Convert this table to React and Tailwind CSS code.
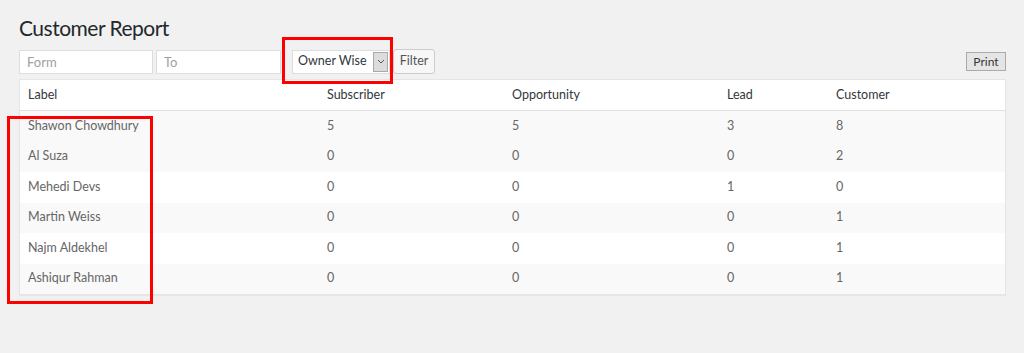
import React from 'react';

const rows = [
  { name: 'Shawon Chowdhury', sub: 5, opp: 5, lead: 3, cust: 8, bg: 'bg-[#f9f9f9]' },
  { name: 'Al Suza', sub: 0, opp: 0, lead: 0, cust: 2, bg: 'bg-[#f9f9f9]' },
  { name: 'Mehedi Devs', sub: 0, opp: 0, lead: 1, cust: 0, bg: 'bg-white' },
  { name: 'Martin Weiss', sub: 0, opp: 0, lead: 0, cust: 1, bg: 'bg-[#f9f9f9]' },
  { name: 'Najm Aldekhel', sub: 0, opp: 0, lead: 0, cust: 1, bg: 'bg-white' },
  { name: 'Ashiqur Rahman', sub: 0, opp: 0, lead: 0, cust: 1, bg: 'bg-[#f9f9f9]' },
];

// column widths taken from the report table
const COLS = 'grid grid-cols-[299px_185px_215px_109px_1fr]';

export default function App() {
  return (
    <div className="relative min-h-[353px] bg-[#f1f1f1] pl-[19px] pr-[18px] pt-[13px] text-[#666] font-['Lato','Open_Sans',sans-serif]">
      <h1 className="text-[21px] tracking-[-0.5px] leading-[30px] text-[#23282d] font-normal">Customer Report</h1>

      {/* Filters */}
      <div className="mt-[6px] flex items-center justify-between h-[25px]">
        <div className="flex items-center">
          <input
            placeholder="Form"
            className="w-[134px] h-[24px] bg-white border border-[#ddd] px-[7px] text-[13px] placeholder:text-[#a0a0a0] outline-none"
          />
          <input
            placeholder="To"
            className="ml-[3px] w-[125px] h-[24px] bg-white border border-[#ddd] px-[7px] text-[13px] placeholder:text-[#a0a0a0] outline-none"
          />
          <div className="ml-[11px] flex items-center w-[98px] h-[24px] bg-white border border-[#ddd] pl-[5px] pr-[1px]">
            <span className="flex-1 text-[12.5px] text-[#32373c]">Owner Wise</span>
            <span className="w-[15px] h-[20px] bg-[#dcdcdc] border border-[#aaa] flex items-center justify-center">
              <svg width="8" height="5" viewBox="0 0 8 5" fill="none">
                <path d="M1 1l3 3 3-3" stroke="#555" strokeWidth="1" />
              </svg>
            </span>
          </div>
          <button className="ml-[3px] h-[25px] w-[42px] bg-[#f7f7f7] border border-[#ccc] rounded-[3px] text-[12.5px] text-[#555]">
            Filter
          </button>
        </div>
        <button className="h-[19px] w-[40px] bg-[#e5e5e5] border border-[#aaa] text-[12px] leading-none text-[#32373c]">
          Print
        </button>
      </div>

      {/* Table */}
      <div className="mt-[5px] bg-white border border-[#e5e5e5] shadow-[0_1px_1px_rgba(0,0,0,0.04)] text-[12.5px]">
        <div className={`${COLS} h-[31px] items-center border-b border-[#e1e1e1] text-[#32373c]`}>
          <div className="pl-[8px]">Label</div>
          <div className="pl-[8px]">Subscriber</div>
          <div className="pl-[8px]">Opportunity</div>
          <div className="pl-[8px]">Lead</div>
          <div className="pl-[8px]">Customer</div>
        </div>
        {rows.map((r) => (
          <div key={r.name} className={`${COLS} h-[30.5px] items-center ${r.bg}`}>
            <div className="pl-[8px]">{r.name}</div>
            <div className="pl-[8px]">{r.sub}</div>
            <div className="pl-[8px]">{r.opp}</div>
            <div className="pl-[8px]">{r.lead}</div>
            <div className="pl-[8px]">{r.cust}</div>
          </div>
        ))}
      </div>

      {/* annotation boxes */}
      <div className="absolute left-[282px] top-[37px] w-[111px] h-[47px] border-[3px] border-[#ff0000]" />
      <div className="absolute left-[7px] top-[116px] w-[146px] h-[188px] border-[3px] border-[#ff0000]" />
    </div>
  );
}
